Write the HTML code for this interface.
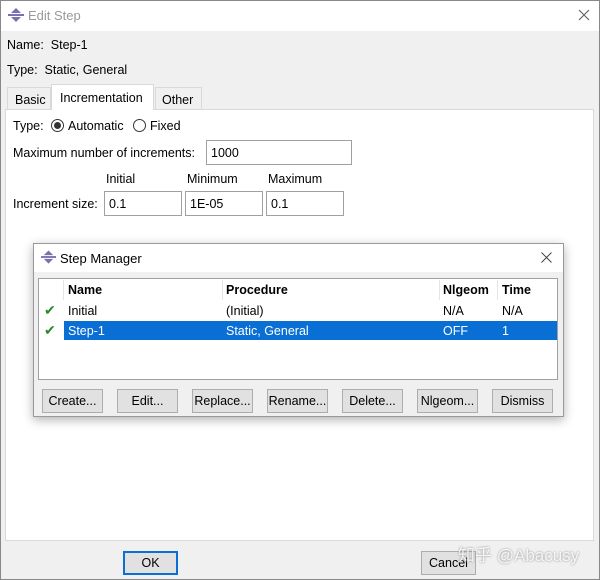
<!DOCTYPE html>
<html><head><style>
*{box-sizing:border-box;margin:0;padding:0}
body{width:600px;height:580px;position:relative;background:#f0f0f0;font-family:"Liberation Sans","Noto Sans CJK SC",sans-serif;font-size:12.5px;color:#000;overflow:hidden}
.a{position:absolute;white-space:nowrap}
.inp{position:absolute;background:#fff;border:1px solid #a0a0a0;padding:5px 4px 0;font-size:12.5px}
.btn{position:absolute;background:#e1e1e1;border:1px solid #adadad;text-align:center;font-size:12.5px;line-height:22px}
</style></head><body>
<div class="a" style="left:0;top:0;width:600px;height:580px;border:1px solid #888"></div>
<div class="a" style="left:1px;top:1px;width:598px;height:30px;background:#fff"></div>
<svg class="a" style="left:8px;top:8px" width="16" height="14" viewBox="0 0 16 14"><path d="M8 0L13 5H3Z" fill="#7a6fb0"/><rect x="0" y="6" width="16" height="2" fill="#7a6fb0"/><path d="M8 14L13 9H3Z" fill="#7a6fb0"/></svg>
<div class="a" style="left:28px;top:8px;color:#999;font-size:13px">Edit Step</div>
<svg class="a" style="left:578px;top:9px" width="12" height="12"><path d="M1 1L11 11M11 1L1 11" stroke="#666" stroke-width="1.2"/></svg>
<div class="a" style="left:7px;top:38px">Name:&nbsp; Step-1</div>
<div class="a" style="left:7px;top:63px">Type:&nbsp; Static, General</div>
<div class="a" style="left:5px;top:109px;width:589px;height:432px;background:#fff;border:1px solid #d9d9d9"></div>
<div class="a" style="left:7px;top:87px;width:44px;height:22px;background:#f0f0f0;border:1px solid #d9d9d9;border-bottom:none;padding:5px 0 0 7px">Basic</div>
<div class="a" style="left:51px;top:84px;width:103px;height:26px;background:#fff;border:1px solid #d9d9d9;border-bottom:none;padding:6px 0 0 8px">Incrementation</div>
<div class="a" style="left:155px;top:87px;width:47px;height:22px;background:#f0f0f0;border:1px solid #d9d9d9;border-bottom:none;padding:5px 0 0 6px">Other</div>
<div class="a" style="left:13px;top:119px">Type:</div>
<div class="a" style="left:51px;top:119px;width:13px;height:13px;border:1px solid #333;border-radius:50%"><div style="margin:2px;width:7px;height:7px;border-radius:50%;background:#333"></div></div>
<div class="a" style="left:68px;top:119px">Automatic</div>
<div class="a" style="left:133px;top:119px;width:13px;height:13px;border:1px solid #333;border-radius:50%"></div>
<div class="a" style="left:150px;top:119px">Fixed</div>
<div class="a" style="left:13px;top:146px">Maximum number of increments:</div>
<div class="inp" style="left:206px;top:140px;width:146px;height:25px">1000</div>
<div class="a" style="left:106px;top:172px">Initial</div>
<div class="a" style="left:187px;top:172px">Minimum</div>
<div class="a" style="left:268px;top:172px">Maximum</div>
<div class="a" style="left:13px;top:197px">Increment size:</div>
<div class="inp" style="left:104px;top:191px;width:78px;height:25px">0.1</div>
<div class="inp" style="left:185px;top:191px;width:78px;height:25px">1E-05</div>
<div class="inp" style="left:266px;top:191px;width:78px;height:25px">0.1</div>

<div class="a" style="left:33px;top:243px;width:531px;height:174px;background:#f0f0f0;border:1px solid #999;box-shadow:0 3px 10px rgba(0,0,0,.3)"></div>
<div class="a" style="left:34px;top:244px;width:529px;height:28px;background:#fff"></div>
<svg class="a" style="left:41px;top:250px" width="15" height="14" viewBox="0 0 16 14"><path d="M8 0L13 5H3Z" fill="#7a6fb0"/><rect x="0" y="6" width="16" height="2" fill="#7a6fb0"/><path d="M8 14L13 9H3Z" fill="#7a6fb0"/></svg>
<div class="a" style="left:60px;top:251px;font-size:13px">Step Manager</div>
<svg class="a" style="left:541px;top:252px" width="11" height="11"><path d="M0.5 0.5L10.5 10.5M10.5 0.5L0.5 10.5" stroke="#444" stroke-width="1"/></svg>
<div class="a" style="left:38px;top:278px;width:520px;height:102px;background:#fff;border:1px solid #a0a0a0"></div>
<div class="a" style="left:63px;top:280px;width:1px;height:20px;background:#e5e5e5"></div>
<div class="a" style="left:222px;top:280px;width:1px;height:20px;background:#e5e5e5"></div>
<div class="a" style="left:439px;top:280px;width:1px;height:20px;background:#e5e5e5"></div>
<div class="a" style="left:497px;top:280px;width:1px;height:20px;background:#e5e5e5"></div>
<div class="a" style="left:68px;top:283px;font-weight:bold">Name</div>
<div class="a" style="left:226px;top:283px;font-weight:bold">Procedure</div>
<div class="a" style="left:443px;top:283px;font-weight:bold">Nlgeom</div>
<div class="a" style="left:502px;top:283px;font-weight:bold">Time</div>
<div class="a" style="left:44px;top:302px;color:#2a8a2a;font-size:14px">✔</div>
<div class="a" style="left:68px;top:304px">Initial</div>
<div class="a" style="left:226px;top:304px">(Initial)</div>
<div class="a" style="left:443px;top:304px">N/A</div>
<div class="a" style="left:502px;top:304px">N/A</div>
<div class="a" style="left:64px;top:321px;width:493px;height:19px;background:#0a6fd4"></div>
<div class="a" style="left:44px;top:322px;color:#2a8a2a;font-size:14px">✔</div>
<div class="a" style="left:68px;top:324px;color:#fff">Step-1</div>
<div class="a" style="left:226px;top:324px;color:#fff">Static, General</div>
<div class="a" style="left:443px;top:324px;color:#fff">OFF</div>
<div class="a" style="left:502px;top:324px;color:#fff">1</div>
<div class="btn" style="left:42px;top:389px;width:61px;height:24px">Create...</div>
<div class="btn" style="left:117px;top:389px;width:61px;height:24px">Edit...</div>
<div class="btn" style="left:192px;top:389px;width:61px;height:24px">Replace...</div>
<div class="btn" style="left:267px;top:389px;width:61px;height:24px">Rename...</div>
<div class="btn" style="left:342px;top:389px;width:61px;height:24px">Delete...</div>
<div class="btn" style="left:417px;top:389px;width:61px;height:24px">Nlgeom...</div>
<div class="btn" style="left:492px;top:389px;width:61px;height:24px">Dismiss</div>

<div class="btn" style="left:123px;top:551px;width:55px;height:24px;border:2px solid #0a6fd4;line-height:20px">OK</div>
<div class="btn" style="left:421px;top:551px;width:55px;height:24px">Cancel</div>
<div class="a" style="left:458px;top:541px;color:rgba(255,255,255,.85);font-size:17px;text-shadow:0 0 2px #888">知乎 @Abacusy</div>
</body></html>
